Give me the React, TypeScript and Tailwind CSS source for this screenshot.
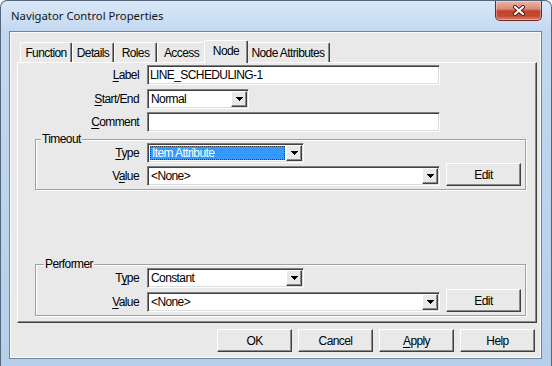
import type { ReactNode } from "react";

// no narrow face installed, so Liberation Sans is tightened to the width of the old dialog font
const font =
  "font-['Liberation_Sans',Arial,sans-serif] text-[12px] tracking-[-0.6px] leading-[16px] text-black";
const sunken =
  "border border-t-[#808080] border-l-[#808080] border-r-white border-b-white shadow-[inset_1px_1px_0_#404040,inset_-1px_-1px_0_#dcdcdc] p-px";
const raised =
  "border border-t-white border-l-white border-r-[#404040] border-b-[#404040] shadow-[inset_-1px_-1px_0_#8a8a8a]";
const tab =
  "flex h-[20px] items-center justify-center rounded-t-[2px] border-x border-t border-l-white border-t-white border-r-[#404040] shadow-[inset_-1px_0_0_#8a8a8a]";

function Arrow() {
  return (
    <div
      className={`flex h-full w-[16px] shrink-0 items-center justify-center bg-[#e9e9e9] ${raised}`}
    >
      <svg width="7" height="4" viewBox="0 0 7 4" shapeRendering="crispEdges">
        <path d="M0 0h7v1h-1v1h-1v1h-1v1h-1v-1h-1v-1h-1v-1h-1z" fill="#000" />
      </svg>
    </div>
  );
}

function Combo({
  className,
  children,
}: {
  className: string;
  children: ReactNode;
}) {
  return (
    <div className={`flex h-[20px] shrink-0 bg-white ${sunken} ${className}`}>
      <div className="flex min-w-0 flex-1 items-center">{children}</div>
      <Arrow />
    </div>
  );
}

function Field({
  className,
  children,
}: {
  className: string;
  children?: ReactNode;
}) {
  return (
    <div
      className={`flex h-[20px] shrink-0 items-center bg-white pl-[2px] ${sunken} ${className}`}
    >
      {children}
    </div>
  );
}

function Lbl({ className, children }: { className: string; children: ReactNode }) {
  return <div className={`shrink-0 text-right ${className}`}>{children}</div>;
}

function Btn({ children }: { children: ReactNode }) {
  return (
    <button
      type="button"
      className={`flex h-[23px] w-[75px] shrink-0 items-center justify-center bg-[#e9e9e9] ${raised}`}
    >
      {children}
    </button>
  );
}

const u = "underline underline-offset-[2px]";

export default function App() {
  return (
    <div className="h-[366px] w-[552px] overflow-hidden bg-white">
      <div className="flex h-[366px] w-[552px] flex-col rounded-t-[7px] border border-b-0 border-[#55657a] bg-[linear-gradient(to_bottom,#d9e8f8_0px,#c3d8f0_30px,#b7cfeb_100%)]">
        {/* title bar */}
        <div className="flex h-[30px] shrink-0 items-start justify-between">
          <span className="ml-[10px] mt-[7px] font-['Noto_Sans',sans-serif] text-[11.3px] leading-[16px] text-[#141414]">
            Navigator Control Properties
          </span>
          <div className="mr-[9px] flex h-[20px] w-[47px] items-center justify-center rounded-b-[5px] border border-t-0 border-[#6e2a22] bg-[linear-gradient(to_bottom,#eab5a8_0%,#dc8a77_42%,#c3432c_52%,#c44a32_78%,#d9806a_100%)] shadow-[inset_0_0_0_1px_rgba(255,255,255,0.35)]">
            <svg width="14" height="11" viewBox="0 0 14 11">
              <path d="M3 2l8 7M11 2l-8 7" stroke="#4a1a14" strokeWidth="4" strokeLinecap="round" />
              <path d="M3 2l8 7M11 2l-8 7" stroke="#fff" strokeWidth="2.2" strokeLinecap="round" />
            </svg>
          </div>
        </div>

        {/* client area */}
        <div
          className={`ml-[8px] flex h-[328px] w-[533px] shrink-0 flex-col border border-[#71849b] bg-[#e9e9e9] pt-[8px] shadow-[inset_1px_1px_0_#fafafa,inset_-1px_-1px_0_#fafafa] ${font}`}
        >
          {/* tabs */}
          <div className="ml-[10px] flex h-[22px] items-end">
            <div className={`w-[52px] ${tab}`}>Function</div>
            <div className={`w-[42px] ${tab}`}>Details</div>
            <div className={`w-[43px] ${tab}`}>Roles</div>
            <div className={`w-[49px] ${tab}`}>Access</div>
            <div className="relative z-10 -mx-[2px] -mb-[1px] flex h-[23px] w-[44px] items-start justify-center rounded-t-[2px] border-x border-t border-l-white border-t-white border-r-[#404040] bg-[#e9e9e9] pt-[2px] shadow-[inset_-1px_0_0_#8a8a8a]">
              Node
            </div>
            <div className={`w-[84px] ${tab}`}>Node Attributes</div>
          </div>

          {/* tab panel */}
          <div className="ml-[7px] h-[261px] w-[520px] shrink-0 border border-l-white border-t-white border-r-[#404040] border-b-[#404040] pt-[2px] shadow-[inset_-1px_-1px_0_#8a8a8a]">
            <div className="flex items-center">
              <Lbl className="w-[121px]">
                <span className={u}>L</span>abel
              </Lbl>
              <Field className="ml-[8px] w-[293px]">LINE_SCHEDULING-1</Field>
            </div>
            <div className="mt-[4px] flex items-center">
              <Lbl className="w-[121px]">
                <span className={u}>S</span>tart/End
              </Lbl>
              <Combo className="ml-[8px] w-[102px]">
                <span className="pl-[2px]">Normal</span>
              </Combo>
            </div>
            <div className="mt-[3px] flex items-center">
              <Lbl className="w-[121px]">
                <span className={u}>C</span>omment
              </Lbl>
              <Field className="ml-[8px] w-[293px]" />
            </div>

            {/* Timeout */}
            <fieldset className="ml-[17px] mt-[3px] w-[491px] border border-[#a0a0a0] pb-[3px] shadow-[inset_1px_1px_0_#fff,1px_1px_0_#fff]">
              <legend className="ml-[5px] bg-[#e9e9e9] px-[1px] leading-[8px]">
                Timeout
              </legend>
              <div className="flex items-center">
                <Lbl className="w-[103px]">
                  <span className={u}>T</span>ype
                </Lbl>
                <Combo className="ml-[8px] w-[157px]">
                  <span className="mx-px flex h-[14px] w-full items-center bg-[#3399ff] pl-[2px] text-white outline-1 outline-dotted outline-[#3a3a3a] -outline-offset-1">
                    Item Attribute
                  </span>
                </Combo>
              </div>
              <div className="flex items-end">
                <div className="flex items-center">
                  <Lbl className="w-[103px]">
                    V<span className={u}>a</span>lue
                  </Lbl>
                  <Combo className="ml-[8px] w-[293px]">
                    <span className="pl-[2px]">&lt;None&gt;</span>
                  </Combo>
                </div>
                <div className="ml-[6px]">
                  <Btn>Edit</Btn>
                </div>
              </div>
            </fieldset>

            {/* Performer */}
            <fieldset className="ml-[17px] mt-[70px] w-[491px] border border-[#a0a0a0] pb-[3px] shadow-[inset_1px_1px_0_#fff,1px_1px_0_#fff]">
              <legend className="ml-[8px] bg-[#e9e9e9] px-[1px] leading-[8px]">
                Performer
              </legend>
              <div className="flex items-center">
                <Lbl className="w-[103px]">
                  T<span className={u}>y</span>pe
                </Lbl>
                <Combo className="ml-[8px] w-[157px]">
                  <span className="pl-[2px]">Constant</span>
                </Combo>
              </div>
              <div className="mt-px flex items-end">
                <div className="flex items-center">
                  <Lbl className="w-[103px]">
                    <span className={u}>V</span>alue
                  </Lbl>
                  <Combo className="ml-[8px] w-[293px]">
                    <span className="pl-[2px]">&lt;None&gt;</span>
                  </Combo>
                </div>
                <div className="ml-[6px]">
                  <Btn>Edit</Btn>
                </div>
              </div>
            </fieldset>
          </div>

          {/* dialog buttons */}
          <div className="mt-[6px] flex justify-end gap-[6px] pr-[6px]">
            <Btn>OK</Btn>
            <Btn>Cancel</Btn>
            <Btn>
              <span className={u}>A</span>pply
            </Btn>
            <Btn>Help</Btn>
          </div>
        </div>
      </div>
    </div>
  );
}
